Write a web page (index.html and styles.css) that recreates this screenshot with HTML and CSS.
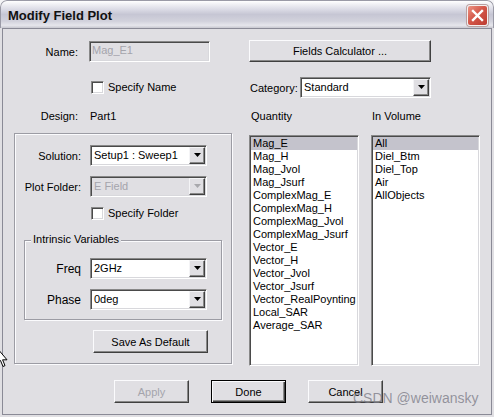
FILE: index.html
```html
<!DOCTYPE html>
<html>
<head>
<meta charset="utf-8">
<link rel="stylesheet" href="styles.css">
</head>
<body>
<div class="window">
  <div class="titlebar">
    <span class="title">Modify Field Plot</span>
    <span class="close"><svg width="13" height="13" viewBox="0 0 13 13"><path d="M2 2 L11 11 M11 2 L2 11" stroke="#fff" stroke-width="2.4" stroke-linecap="square"/></svg></span>
  </div>
  <div class="client">
    <div class="main">
      <div class="col-left">
        <div class="row r-name">
          <span class="lbl lbl-top">Name:</span>
          <div class="textbox disabled">Mag_E1</div>
        </div>
        <div class="row r-check1">
          <span class="check"></span><span>Specify Name</span>
        </div>
        <div class="row r-design">
          <span class="lbl lbl-top">Design:</span><span class="design-val">Part1</span>
        </div>
        <div class="group">
          <div class="row r-solution">
            <span class="lbl lbl-grp">Solution:</span>
            <div class="combo w117"><span class="val">Setup1 : Sweep1</span><span class="arrow"><svg width="7" height="4" viewBox="0 0 7 4"><path d="M0 0 H7 L3.5 4 Z" fill="#000"/></svg></span></div>
          </div>
          <div class="row r-folder">
            <span class="lbl lbl-grp">Plot Folder:</span>
            <div class="combo w117 disabled"><span class="val">E Field</span><span class="arrow"><svg width="7" height="4" viewBox="0 0 7 4"><path d="M0 0 H7 L3.5 4 Z" fill="#a8a8ac"/></svg></span></div>
          </div>
          <div class="row r-check2">
            <span class="check"></span><span>Specify Folder</span>
          </div>
          <div class="subgroup">
            <span class="legend">Intrinsic Variables</span>
            <div class="row r-freq">
              <span class="lbl lbl-sub">Freq</span>
              <div class="combo w117"><span class="val">2GHz</span><span class="arrow"><svg width="7" height="4" viewBox="0 0 7 4"><path d="M0 0 H7 L3.5 4 Z" fill="#000"/></svg></span></div>
            </div>
            <div class="row r-phase">
              <span class="lbl lbl-sub">Phase</span>
              <div class="combo w117"><span class="val">0deg</span><span class="arrow"><svg width="7" height="4" viewBox="0 0 7 4"><path d="M0 0 H7 L3.5 4 Z" fill="#000"/></svg></span></div>
            </div>
          </div>
          <div class="btn btn-save">Save As Default</div>
        </div>
      </div>
      <div class="col-right">
        <div class="btn btn-calc">Fields Calculator ...</div>
        <div class="row r-category">
          <span class="cat-lbl">Category:</span>
          <div class="combo w131"><span class="val">Standard</span><span class="arrow"><svg width="7" height="4" viewBox="0 0 7 4"><path d="M0 0 H7 L3.5 4 Z" fill="#000"/></svg></span></div>
        </div>
        <div class="row r-heads">
          <span class="head-q">Quantity</span><span class="head-v">In Volume</span>
        </div>
        <div class="lists">
          <div class="listbox lb-q">
            <div class="item sel">Mag_E</div>
            <div class="item">Mag_H</div>
            <div class="item">Mag_Jvol</div>
            <div class="item">Mag_Jsurf</div>
            <div class="item">ComplexMag_E</div>
            <div class="item">ComplexMag_H</div>
            <div class="item">ComplexMag_Jvol</div>
            <div class="item">ComplexMag_Jsurf</div>
            <div class="item">Vector_E</div>
            <div class="item">Vector_H</div>
            <div class="item">Vector_Jvol</div>
            <div class="item">Vector_Jsurf</div>
            <div class="item">Vector_RealPoynting</div>
            <div class="item">Local_SAR</div>
            <div class="item">Average_SAR</div>
          </div>
          <div class="listbox lb-v">
            <div class="item sel">All</div>
            <div class="item">Diel_Btm</div>
            <div class="item">Diel_Top</div>
            <div class="item">Air</div>
            <div class="item">AllObjects</div>
          </div>
        </div>
      </div>
    </div>
    <div class="buttons">
      <div class="btn btn-bottom disabled-btn">Apply</div>
      <div class="btn btn-bottom default">Done</div>
      <div class="btn btn-bottom">Cancel</div>
    </div>
  </div>
  <div class="watermark">CSDN @weiwansky</div>
  <svg class="cursor" width="10" height="22" viewBox="0 0 10 22"><path d="M-3 0 L-3 16 L0.5 12.5 L3 18.5 L5 17.6 L2.6 11.8 L7 11.8 Z" fill="#fff" stroke="#000" stroke-width="1"/></svg>
</div>
</body>
</html>
```
FILE: styles.css
```css
html, body {
  margin: 0;
  padding: 0;
  background: #f4f4f6;
}
body {
  font-family: "Liberation Sans", Arial, sans-serif;
  font-size: 11px;
  color: #000;
}
.window {
  position: relative;
  width: 494px;
  height: 417px;
  box-sizing: border-box;
  background: #e0dfe3;
  border-radius: 7px 7px 0 0;
  display: flex;
  flex-direction: column;
  overflow: hidden;
}
.titlebar {
  height: 28px;
  flex: none;
  display: flex;
  align-items: center;
  justify-content: space-between;
  padding: 0 5px 0 7px;
  border-radius: 7px 7px 0 0;
  border: 1px solid #9a9aa6;
  border-bottom: none;
  box-sizing: border-box;
  background: linear-gradient(#ffffff 0%, #f0f0f4 12%, #dcdce6 30%, #c6c6d4 50%, #d2d2dc 75%, #e6e6ec 90%, #c8c8d0 100%);
}
.title {
  font-family: "Liberation Sans", Arial, sans-serif;
  font-weight: bold;
  font-size: 13px;
  color: #111;
  margin-top: 1px;
}
.close {
  width: 21px;
  height: 21px;
  box-sizing: border-box;
  border: 1px solid #f4f0f0;
  border-radius: 3px;
  background: linear-gradient(135deg, #ec9484 0%, #d4584a 45%, #bc3a30 100%);
  box-shadow: 0 0 0 1px #b8a0a0;
  display: flex;
  align-items: center;
  justify-content: center;
  margin-top: 2px;
}
.client {
  flex: 1;
  margin: 0 2px 2px 2px;
  border: 1px solid #8a8a96;
  padding: 11px 0 0 11px;
  display: flex;
  flex-direction: column;
}
.main {
  display: flex;
  gap: 17px;
}
.col-left {
  width: 218px;
  padding-top: 1px;
  display: flex;
  flex-direction: column;
}
.col-right {
  width: 231px;
  display: flex;
  flex-direction: column;
}
.row {
  display: flex;
  align-items: center;
}
.lbl {
  text-align: right;
  flex: none;
}
.lbl-top { width: 64px; }
.lbl-grp { width: 66px; margin-right: 9px; }
.lbl-sub { width: 56px; margin-right: 9px; }
.r-name { height: 21px; gap: 11px; }
.textbox {
  width: 121px;
  height: 21px;
  box-sizing: border-box;
  padding-left: 2px;
  line-height: 17px;
  border: 1px solid;
  border-color: #888 #fff #fff #888;
  box-shadow: inset 1px 1px #4a4a4a, inset -1px -1px #d8d8dc;
  background: #fff;
}
.textbox.disabled {
  background: #e0dfe3;
  color: #a4a4ac;
}
.r-check1 { margin-top: 15px; height: 20px; padding-left: 77px; }
.r-check2 { margin-top: 6px; height: 20px; padding-left: 76px; }
.check {
  width: 13px;
  height: 13px;
  box-sizing: border-box;
  border: 1px solid;
  border-color: #888 #fff #fff #888;
  box-shadow: inset 1px 1px #4a4a4a, inset -1px -1px #d8d8dc;
  background: #fff;
  margin-right: 4px;
  flex: none;
}
.r-design { margin-top: 11px; height: 16px; }
.design-val { margin-left: 12px; }
.group {
  margin-top: 9px;
  width: 218px;
  box-sizing: border-box;
  border: 1px solid #9c9ca4;
  box-shadow: inset 1px 1px #fbfbfd, 1px 1px #fbfbfd;
  padding: 11px 0 10px 0;
  display: flex;
  flex-direction: column;
}
.r-solution { height: 21px; }
.r-folder { height: 21px; margin-top: 10px; }
.combo {
  height: 21px;
  box-sizing: border-box;
  border: 1px solid;
  border-color: #888 #fff #fff #888;
  box-shadow: inset 1px 1px #4a4a4a, inset -1px -1px #d8d8dc;
  background: #fff;
  display: flex;
  align-items: stretch;
  padding: 1px;
}
.w117 { width: 117px; }
.w131 { width: 131px; }
.combo .val {
  flex: 1;
  padding-left: 2px;
  line-height: 17px;
  white-space: nowrap;
  overflow: hidden;
}
.combo .arrow {
  width: 16px;
  flex: none;
  box-sizing: border-box;
  border: 1px solid;
  border-color: #f4f4f6 #404040 #404040 #f4f4f6;
  box-shadow: inset -1px -1px #888;
  background: #e0dfe3;
  display: flex;
  align-items: center;
  justify-content: center;
  padding-bottom: 1px;
}
.combo.disabled { background: #e0dfe3; }
.combo.disabled .val { color: #a4a4ac; }
.subgroup {
  margin: 17px 0 0 9px;
  width: 198px;
  box-sizing: border-box;
  border: 1px solid #9c9ca4;
  box-shadow: inset 1px 1px #fbfbfd, 1px 1px #fbfbfd;
  padding: 0 0 9px 0;
  display: flex;
  flex-direction: column;
}
.legend {
  display: block;
  width: fit-content;
  margin: -8px 0 0 6px;
  padding: 0 2px;
  background: #e0dfe3;
  line-height: 13px;
}
.r-freq { height: 21px; margin-top: 12px; }
.r-phase { height: 21px; margin-top: 10px; }
.r-freq .lbl, .r-phase .lbl { font-size: 12px; }
.btn {
  box-sizing: border-box;
  border: 1px solid;
  border-color: #fbfbfd #404040 #404040 #fbfbfd;
  box-shadow: inset -1px -1px #888;
  background: #e0dfe3;
  display: flex;
  align-items: center;
  justify-content: center;
  white-space: nowrap;
}
.btn-save {
  margin: 10px 0 0 78px;
  width: 115px;
  height: 23px;
}
.btn-calc {
  width: 182px;
  height: 22px;
}
.r-category { margin-top: 15px; height: 21px; }
.cat-lbl { width: 50px; padding-left: 1px; white-space: nowrap; }
.r-heads { margin-top: 10px; height: 16px; }
.head-q { width: 121px; padding-left: 2px; }
.lists {
  margin-top: 11px;
  display: flex;
  gap: 12px;
}
.listbox {
  height: 231px;
  box-sizing: border-box;
  border: 1px solid;
  border-color: #888 #fff #fff #888;
  box-shadow: inset 1px 1px #4a4a4a, inset -1px -1px #d8d8dc;
  background: #fff;
  padding: 1px;
  overflow: hidden;
}
.lb-q { width: 110px; }
.lb-v { width: 109px; }
.item {
  height: 13px;
  line-height: 13px;
  padding-left: 2px;
  white-space: nowrap;
}
.item.sel { background: #c4c3cc; }
.buttons {
  display: flex;
  gap: 22px;
  margin: 14px 0 0 100px;
}
.btn-bottom {
  width: 75px;
  height: 23px;
}
.disabled-btn { color: #a4a4ac; }
.default {
  border: 1px solid #000;
  box-shadow: inset 1px 1px #fbfbfd, inset -1px -1px #404040, inset -2px -2px #888;
}
.watermark {
  position: absolute;
  left: 353px;
  top: 390px;
  font-family: "Liberation Sans", Arial, sans-serif;
  font-size: 14px;
  color: rgba(120, 120, 132, 0.75);
  white-space: nowrap;
}
.cursor {
  position: absolute;
  left: 0;
  top: 348px;
}
```
